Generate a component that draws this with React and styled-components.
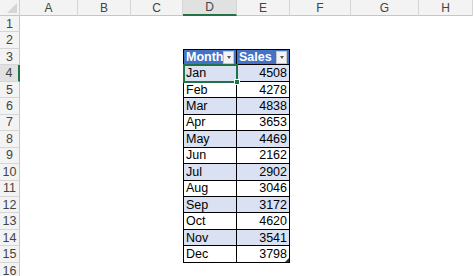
import React from 'react'
import styled, { createGlobalStyle } from 'styled-components'

const Global = createGlobalStyle`
  html, body { margin: 0; padding: 0; background: #fff; overflow: hidden; }
  body { font-family: "Liberation Sans", Arial, sans-serif; }
`

const cols = ['A', 'B', 'C', 'D', 'E', 'F', 'G', 'H']
const data = [
  ['Jan', 4508], ['Feb', 4278], ['Mar', 4838], ['Apr', 3653], ['May', 4469],
  ['Jun', 2162], ['Jul', 2902], ['Aug', 3046], ['Sep', 3172], ['Oct', 4620],
  ['Nov', 3541], ['Dec', 3798],
]

const Sheet = styled.div`
  display: grid;
  grid-template-columns: 20px 58px 53px 52px 54px 53px 61px 68px 54px;
  grid-template-rows: 16px repeat(16, 16.46px);
  width: 474px;
  height: 276px;
  overflow: hidden;
  font-size: 12px;
  color: #000;
`

const Corner = styled.div`
  background: #f3f3f3;
  border-right: 1px solid #d0d0d0;
  border-bottom: 1px solid #c6c6c6;
  position: relative;
  &::after {
    content: '';
    position: absolute;
    right: 2px;
    bottom: 2px;
    border-style: solid;
    border-width: 0 0 10px 10px;
    border-color: transparent transparent #d6d6d6 transparent;
  }
`

const ColHead = styled.div`
  background: ${p => (p.$active ? '#e1e1e1' : '#f3f3f3')};
  border-right: 1px solid #d6d6d6;
  border-bottom: ${p => (p.$active ? '2px solid #217346' : '1px solid #c6c6c6')};
  display: flex;
  align-items: center;
  justify-content: center;
  color: #444;
  font-size: 12px;
  box-sizing: border-box;
`

const RowHead = styled.div`
  background: ${p => (p.$active ? '#e1e1e1' : '#f3f3f3')};
  border-right: ${p => (p.$active ? '2px solid #217346' : '1px solid #c6c6c6')};
  border-bottom: 1px solid #d6d6d6;
  display: flex;
  align-items: center;
  justify-content: center;
  color: #444;
  font-size: 12.5px;
  box-sizing: border-box;
`

const Cell = styled.div`
  background: #fff;
`

const TCell = styled.div`
  position: relative;
  box-sizing: border-box;
  background: ${p => (p.$head ? '#4472c4' : p.$band ? '#d9e1f2' : '#fff')};
  color: ${p => (p.$head ? '#fff' : '#000')};
  font-weight: ${p => (p.$head ? 700 : 400)};
  border-left: ${p => (p.$first ? '1px solid #000' : 'none')};
  border-right: 1px solid #000;
  border-top: ${p => (p.$head ? '1px solid #000' : 'none')};
  border-bottom: 1px solid #000;
  display: flex;
  align-items: center;
  justify-content: ${p => (p.$num ? 'flex-end' : 'flex-start')};
  padding: 0 2px 0 2px;
  white-space: nowrap;
  font-size: 12.5px;
`

const HeadText = styled.span`
  flex: 1;
  overflow: hidden;
  white-space: nowrap;
`

const Drop = styled.span`
  flex: none;
  width: 9px;
  height: 11px;
  margin-left: -1px;
  background: #f4f4f4;
  border: 1px solid #c8c8c8;
  display: flex;
  align-items: center;
  justify-content: center;
  &::after {
    content: '';
    border-style: solid;
    border-width: 3px 2.5px 0 2.5px;
    border-color: #555 transparent transparent transparent;
  }
`

const Selection = styled.div`
  position: absolute;
  z-index: 3;
  left: -1px;
  top: -1px;
  right: -2px;
  bottom: -2px;
  border: 2px solid #217346;
  pointer-events: none;
  &::after {
    content: '';
    position: absolute;
    right: -4px;
    bottom: -4px;
    width: 4px;
    height: 4px;
    background: #217346;
    border: 1px solid #fff;
  }
`

const Resize = styled.span`
  position: absolute;
  right: 0;
  bottom: 0;
  border-style: solid;
  border-width: 0 0 4px 4px;
  border-color: transparent transparent #333 transparent;
`

function Row({ r }) {
  const cells = []
  cols.forEach(c => {
    const key = `${c}${r}`
    if ((c === 'D' || c === 'E') && r >= 3 && r <= 15) {
      if (r === 3) {
        cells.push(
          <TCell key={key} $head $first={c === 'D'}>
            <HeadText>{c === 'D' ? 'Months' : 'Sales'}</HeadText>
            <Drop />
          </TCell>
        )
      } else {
        const [m, v] = data[r - 4]
        const band = (r - 4) % 2 === 0
        cells.push(
          <TCell key={key} $band={band} $first={c === 'D'} $num={c === 'E'}>
            {c === 'D' ? m : v}
            {c === 'D' && r === 4 && <Selection />}
            {c === 'E' && r === 15 && <Resize />}
          </TCell>
        )
      }
    } else {
      cells.push(<Cell key={key} />)
    }
  })
  return (
    <>
      <RowHead $active={r === 4}>{r}</RowHead>
      {cells}
    </>
  )
}

export default function App() {
  const rows = Array.from({ length: 16 }, (_, i) => i + 1)
  return (
    <>
      <Global />
      <Sheet>
        <Corner />
        {cols.map(c => (
          <ColHead key={c} $active={c === 'D'}>{c}</ColHead>
        ))}
        {rows.map(r => (
          <Row key={r} r={r} />
        ))}
      </Sheet>
    </>
  )
}
